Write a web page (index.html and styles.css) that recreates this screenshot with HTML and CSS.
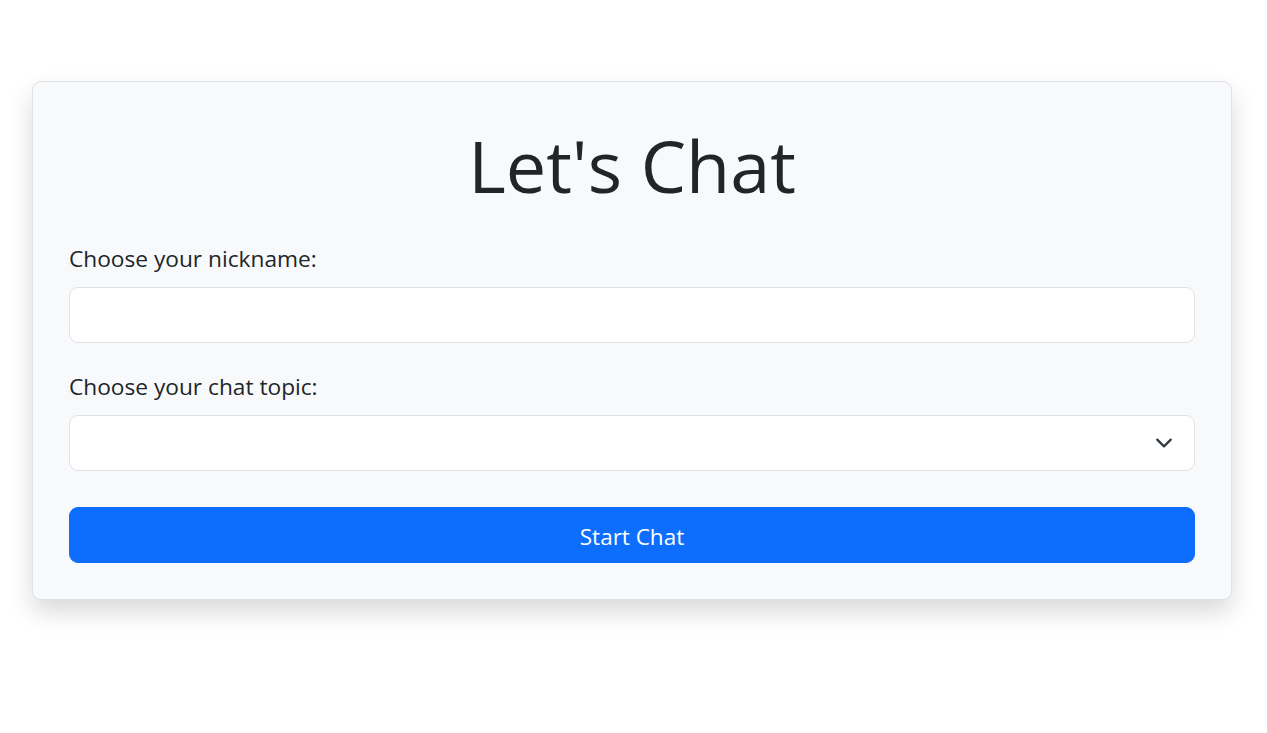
FILE: index.html
```html
<!DOCTYPE html>
<html lang="en">
<head>
<meta charset="utf-8">
<title>Let's Chat</title>
<link rel="stylesheet" href="styles.css">
</head>
<body>
<main class="page">
  <form class="card">
    <h1 class="title">Let's Chat</h1>
    <div class="group">
      <label class="label" for="nick">Choose your nickname:</label>
      <input class="field" id="nick" type="text">
    </div>
    <div class="group group-last">
      <label class="label" for="topic">Choose your chat topic:</label>
      <div class="select-wrap">
        <select class="field select" id="topic">
          <option></option>
        </select>
        <svg class="chevron" viewBox="0 0 16 16" width="18" height="18" aria-hidden="true">
          <path d="m2 5 6 6 6-6" fill="none" stroke="#343a40" stroke-width="2" stroke-linecap="round" stroke-linejoin="round"/>
        </svg>
      </div>
    </div>
    <button class="btn" type="button">Start Chat</button>
  </form>
</main>
</body>
</html>
```

FILE: styles.css
```css
html {
  background: #ffffff;
}

body {
  margin: 0;
  padding: 0;
  min-height: 100vh;
  font-family: "Open Sans", "Noto Sans", "Liberation Sans", sans-serif;
  color: #212529;
}

.page {
  padding: 81px 35px 80px 32px;
}

.card {
  width: 1200px;
  box-sizing: border-box;
  background: #f8f9fa;
  border: 1px solid #dfe1e4;
  border-radius: 9px;
  box-shadow: 0 12px 24px rgba(0, 0, 0, 0.15);
  padding: 36px;
  display: flex;
  flex-direction: column;
}

.title {
  margin: 0 0 29px;
  font-size: 72px;
  font-weight: 400;
  line-height: 94px;
  text-align: center;
  color: #212529;
}

.group {
  display: flex;
  flex-direction: column;
  margin-bottom: 24px;
}

.group-last {
  margin-bottom: 36px;
}

.label {
  font-size: 22.7px;
  line-height: 36px;
  margin-bottom: 10px;
}

.group-last .label {
  margin-top: 2px;
  margin-bottom: 10px;
}

.field {
  display: block;
  box-sizing: border-box;
  width: 100%;
  height: 56px;
  margin: 0;
  padding: 9px 18px;
  font-family: inherit;
  font-size: 22.5px;
  color: #212529;
  background: #ffffff;
  border: 1px solid #dee2e6;
  border-radius: 9px;
  outline: none;
}

.select-wrap {
  position: relative;
}

.select {
  -webkit-appearance: none;
  appearance: none;
  padding-right: 54px;
}

.chevron {
  position: absolute;
  right: 22px;
  top: 19px;
  pointer-events: none;
}

.btn {
  display: block;
  width: 100%;
  height: 56px;
  margin: 0;
  padding: 3px 18px 0;
  font-family: inherit;
  font-size: 22.5px;
  line-height: 36px;
  color: #ffffff;
  background: #0d6efd;
  border: 1px solid #0d6efd;
  border-radius: 9px;
  cursor: pointer;
}
```
